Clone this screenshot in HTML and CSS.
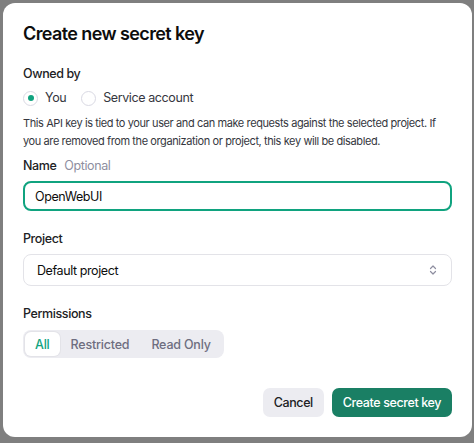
FILE: index.html
```html
<!DOCTYPE html>
<html>
<head>
<meta charset="utf-8">
<link rel="stylesheet" href="styles.css">
</head>
<body>
<div class="dialog">
  <h1 class="title">Create new secret key</h1>
  <div class="field owned">
    <div class="label">Owned by</div>
    <div class="radios">
      <label class="radio"><span class="dot checked"></span><span>You</span></label>
      <label class="radio"><span class="dot"></span><span>Service account</span></label>
    </div>
    <p class="help">This API key is tied to your user and can make requests against the selected project. If you are removed from the organization or project, this key will be disabled.</p>
  </div>
  <div class="field name">
    <div class="label">Name <span class="optional">Optional</span></div>
    <div class="input focused">OpenWebUI</div>
  </div>
  <div class="field project">
    <div class="label">Project</div>
    <div class="input select">
      <span>Default project</span>
      <svg class="chev" width="8" height="12" viewBox="0 0 8 12" fill="none" stroke="#8e8ea0" stroke-width="1.2" stroke-linecap="round" stroke-linejoin="round"><path d="M1.5 4.5 L4 2 L6.5 4.5"/><path d="M1.5 7.5 L4 10 L6.5 7.5"/></svg>
    </div>
  </div>
  <div class="field perms">
    <div class="label">Permissions</div>
    <div class="segments">
      <span class="seg active">All</span>
      <span class="seg">Restricted</span>
      <span class="seg">Read Only</span>
    </div>
  </div>
  <div class="actions">
    <button class="btn cancel">Cancel</button>
    <button class="btn primary">Create secret key</button>
  </div>
</div>
</body>
</html>
```
FILE: styles.css
```css
html, body {
  margin: 0;
  padding: 0;
}
body {
  background: #7f7f7f;
  font-family: Inter, "Noto Sans", sans-serif;
  color: #0d0d0d;
  width: 474px;
  height: 443px;
  overflow: hidden;
}
.dialog {
  margin: 3px 0 0 3px;
  width: 469px;
  height: 434px;
  box-sizing: border-box;
  background: #fff;
  border-radius: 12px;
  padding: 19px 20px 0 20px;
  display: flex;
  flex-direction: column;
}
.title {
  margin: 0;
  font-size: 18px;
  font-weight: 600;
  line-height: 24px;
  letter-spacing: -0.6px;
}
.field {
  display: flex;
  flex-direction: column;
}
.owned { margin-top: 19px; }
.name { margin-top: 7px; }
.project { margin-top: 19px; }
.perms { margin-top: 19px; }
.label {
  font-size: 12.5px;
  font-weight: 500;
  line-height: 18px;
  letter-spacing: -0.4px;
  color: #202123;
}
.optional {
  color: #8e8ea0;
  font-weight: 400;
  margin-left: 5px;
}
.radios {
  display: flex;
  gap: 15px;
  margin-top: 6px;
  font-size: 12.5px;
  line-height: 18px;
  letter-spacing: -0.4px;
  color: #353740;
}
.radio {
  display: flex;
  align-items: center;
  gap: 7px;
}
.dot {
  width: 15px;
  height: 15px;
  border-radius: 50%;
  border: 1px solid #d9d9e3;
  box-sizing: border-box;
  display: flex;
  align-items: center;
  justify-content: center;
}
.dot.checked::after {
  content: "";
  width: 6px;
  height: 6px;
  border-radius: 50%;
  background: #10a37f;
}
.help {
  margin: 7px 0 0;
  max-width: 425px;
  font-size: 11px;
  line-height: 18px;
  letter-spacing: -0.4px;
  color: #353740;
}
.input {
  margin-top: 6px;
  height: 30px;
  box-sizing: border-box;
  border: 1px solid #e3e3e8;
  border-radius: 8px;
  padding: 0 12px;
  display: flex;
  align-items: center;
  font-size: 12.5px;
  letter-spacing: -0.4px;
  color: #0d0d0d;
}
.input.focused {
  border: 2px solid #10a37f;
  padding-left: 10px;
}
.select {
  height: 32px;
  padding-left: 13px;
  padding-right: 14px;
  justify-content: space-between;
}
.segments {
  margin-top: 7px;
  align-self: flex-start;
  display: flex;
  background: #ececf1;
  border-radius: 8px;
  padding: 2px;
  height: 28px;
  box-sizing: border-box;
}
.seg {
  display: flex;
  align-items: center;
  padding: 0 11px;
  font-size: 12.5px;
  font-weight: 500;
  letter-spacing: -0.2px;
  color: #6e6e80;
  border-radius: 6px;
}
.seg.active {
  padding: 0 10px;
  background: #fff;
  color: #10a37f;
  box-shadow: 0 0 0 1px #e3e3e8;
}
.actions {
  margin-top: auto;
  margin-bottom: 20px;
  display: flex;
  justify-content: flex-end;
  gap: 8px;
}
.btn {
  font-family: inherit;
  font-size: 12.5px;
  font-weight: 500;
  letter-spacing: -0.4px;
  height: 29px;
  border: none;
  border-radius: 7px;
  padding: 0 11px;
}
.cancel {
  background: #ececf1;
  color: #202123;
}
.primary {
  background: #1a7f64;
  color: #fff;
}
```
